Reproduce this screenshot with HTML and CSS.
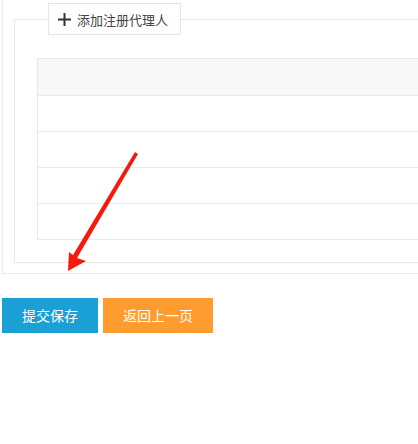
FILE: index.html
```html
<!DOCTYPE html>
<html lang="zh-CN">
<head>
    <meta charset="UTF-8">
    <meta name="viewport" content="width=device-width, initial-scale=1.0">
    <title>注册代理人</title>
    <link rel="stylesheet" href="styles.css">
</head>
<body>
    <div class="panel">
        <div class="group">
            <div class="legend">
                <svg class="plus" width="13" height="13" viewBox="0 0 13 13">
                    <path d="M6.5 0v13M0 6.5h13" stroke="#333" stroke-width="2"/>
                </svg>
                添加注册代理人
            </div>
            <div class="grid">
                <div class="row head"></div>
                <div class="row"></div>
                <div class="row"></div>
                <div class="row"></div>
                <div class="row"></div>
            </div>
        </div>
    </div>
    <div class="actions">
        <a class="btn btn-save" href="#">提交保存</a>
        <a class="btn btn-back" href="#">返回上一页</a>
    </div>
    <svg class="pointer" width="418" height="444" viewBox="0 0 418 444">
        <polygon points="135,152 138,154 77,258 86,261 68,271 69,252 73,255" fill="#f6190c"/>
    </svg>
</body>
</html>
```

FILE: styles.css
```css
html, body {
    margin: 0;
    padding: 0;
    overflow: hidden;
}
body {
    font-family: "Microsoft YaHei", "Noto Sans CJK SC", sans-serif;
    background-color: #fff;
    color: #333;
    position: relative;
    height: 444px;
}
.panel {
    margin-left: 2px;
    border: 1px solid #ebebeb;
    border-top: none;
    border-right: none;
    padding: 19px 0 0 11px;
}
.group {
    border: 1px solid #e8e8e8;
    border-right: none;
    padding: 0 0 22px 22px;
    margin-bottom: 10px;
}
.legend {
    display: flex;
    align-items: center;
    width: fit-content;
    height: 30px;
    margin: -17px 0 0 11px;
    padding: 0 12px 0 9px;
    border: 1px solid #e5e5e5;
    background-color: #fff;
    font-size: 13px;
    color: #444;
}
.plus {
    margin-right: 6px;
}
.grid {
    margin-top: 23px;
    border: 1px solid #e8e8e8;
    border-bottom: none;
    border-right: none;
}
.row {
    height: 35px;
    border-bottom: 1px solid #e8e8e8;
}
.row.head {
    height: 36px;
    background-color: #f8f8f8;
}
.actions {
    display: flex;
    gap: 5px;
    margin: 24px 0 0 2px;
}
.btn {
    display: block;
    height: 35px;
    line-height: 35px;
    padding: 0 20px;
    font-size: 14px;
    color: #fff;
    text-decoration: none;
}
.btn-save {
    width: 56px;
    background-color: #1aa0d5;
}
.btn-back {
    width: 70px;
    background-color: #ff9b2f;
}
.pointer {
    position: absolute;
    left: 0;
    top: 0;
}
```
